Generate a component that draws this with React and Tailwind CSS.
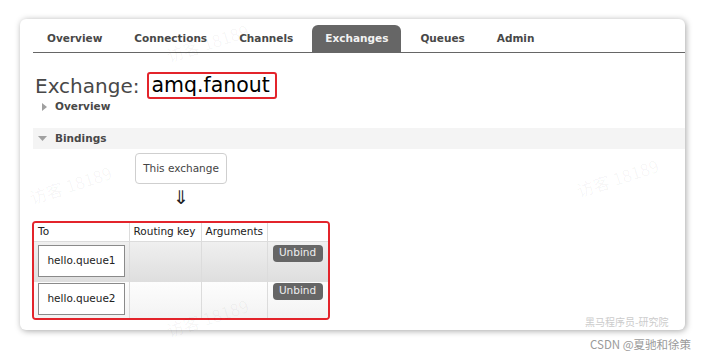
import React from "react";

const tabs = ["Overview", "Connections", "Channels", "Exchanges", "Queues", "Admin"];

function Watermark({ className }) {
  return (
    <div
      className={
        "absolute pointer-events-none select-none text-[17px] text-[#000]/[0.04] rotate-[-18deg] whitespace-nowrap font-['Noto_Sans_CJK_SC',sans-serif] " +
        className
      }
    >
      访客 18189
    </div>
  );
}

function Row({ name, rowClass, padTop }) {
  return (
    <tr className={rowClass}>
      <td className={"align-top border-r border-[#dcdcdc] pl-[4px] pr-[4px] " + padTop}>
        <div className="w-[87px] h-[32px] bg-white border border-[#8a8a8a] flex items-center justify-center text-[10.5px] text-[#222]">
          {name}
        </div>
      </td>
      <td className="border-r border-[#dcdcdc]"></td>
      <td className="border-r border-[#dcdcdc]"></td>
      <td className={"align-top pl-[5px] " + padTop}>
        <div className="w-[50px] h-[17px] rounded-[4px] bg-[#666] text-[#eee] text-[10.5px] flex items-center justify-center">
          Unbind
        </div>
      </td>
    </tr>
  );
}

export default function App() {
  return (
    <div className="relative w-[714px] h-[359px] bg-white overflow-hidden pt-[19px] pl-[20px] font-['DejaVu_Sans',Verdana,sans-serif]">
      <div className="w-[665px] h-[311px] rounded-[6px] bg-white shadow-[1px_1px_6px_rgba(0,0,0,0.35)] pl-[13px] pt-[6px]">
        {/* Tabs */}
        <ul className="flex items-end gap-[6px] pl-[1px] h-[28px] border-b border-[#666]">
          {tabs.map((t) => (
            <li
              key={t}
              className={
                "h-[27px] px-[13px] flex items-center text-[10.5px] font-bold " +
                (t === "Exchanges" ? "bg-[#666] text-[#f2f2f2] rounded-t-[6px]" : "text-[#484848]")
              }
            >
              {t}
            </li>
          ))}
        </ul>

        {/* Title */}
        <div className="mt-[19px] ml-[2px] flex items-center h-[27px] text-[20px] text-[#484848] leading-none">
          <span>Exchange:</span>
          <span className="ml-[8px] h-[27px] flex items-center border-2 border-[#e3242b] rounded-[3px] pl-[2px] pr-[5px] text-[20.5px] text-black">
            amq.fanout
          </span>
        </div>

        {/* Overview collapsible */}
        <div className="mt-[1px] h-[14px] flex items-center pl-[9px]">
          <svg width="5" height="8" viewBox="0 0 5 8" className="block">
            <path d="M0 0 L5 4 L0 8 Z" fill="#a0a0a0" />
          </svg>
          <span className="ml-[8px] text-[10.5px] font-bold text-[#484848]">Overview</span>
        </div>

        {/* Bindings band */}
        <div className="mt-[14px] h-[21px] bg-[#f4f4f4] flex items-center pl-[5px]">
          <svg width="9" height="5" viewBox="0 0 9 5" className="block">
            <path d="M0 0 L9 0 L4.5 5 Z" fill="#a0a0a0" />
          </svg>
          <span className="ml-[8px] text-[10.5px] font-bold text-[#484848]">Bindings</span>
        </div>

        {/* This exchange */}
        <div className="ml-[102px] mt-[4px] w-[92px] h-[31px] border border-[#cfcfcf] rounded-[4px] flex items-center justify-center text-[10.5px] text-[#444]">
          This exchange
        </div>
        <div className="ml-[102px] w-[92px] h-[26px] flex items-center justify-center text-[19px] text-[#222] leading-none">
          ⇓
        </div>

        {/* Bindings table */}
        <div className="ml-[-1px] mt-[11px] w-[298px] border-2 border-[#e3242b] rounded-[4px] overflow-hidden">
          <table className="border-collapse w-[294px] table-fixed text-[10.5px] text-[#222]">
            <colgroup>
              <col className="w-[95px]" />
              <col className="w-[72px]" />
              <col className="w-[66px]" />
              <col className="w-[61px]" />
            </colgroup>
            <thead>
              <tr className="h-[18px] bg-white border-b border-[#dcdcdc]">
                <th className="font-normal text-left pl-[4px] border-r border-[#dcdcdc]">To</th>
                <th className="font-normal text-left pl-[4px] border-r border-[#dcdcdc]">Routing key</th>
                <th className="font-normal text-left pl-[4px] border-r border-[#dcdcdc]">Arguments</th>
                <th></th>
              </tr>
            </thead>
            <tbody>
              <Row
                name="hello.queue1"
                padTop="pt-[3px] pb-[5px]"
                rowClass="h-[40px] bg-gradient-to-b from-[#f0f0f0] to-[#dedede]"
              />
              <Row
                name="hello.queue2"
                padTop="pt-[1px] pb-[3px]"
                rowClass="h-[36px] bg-gradient-to-b from-[#fdfdfd] to-[#f3f3f3]"
              />
            </tbody>
          </table>
        </div>
      </div>

      {/* Watermarks */}
      <Watermark className="left-[165px] top-[30px]" />
      <Watermark className="left-[28px] top-[172px]" />
      <Watermark className="left-[575px] top-[165px]" />
      <Watermark className="left-[165px] top-[305px]" />
      <div className="absolute left-[585px] top-[317px] text-[10px] leading-none text-[#cccccc] font-['Noto_Sans_CJK_SC',sans-serif]">
        黑马程序员-研究院
      </div>
      <div className="absolute left-[590px] top-[339px] text-[11.5px] leading-none text-[#9a9a9a] font-['Noto_Sans_CJK_SC',sans-serif]">
        CSDN @夏驰和徐策
      </div>
    </div>
  );
}
